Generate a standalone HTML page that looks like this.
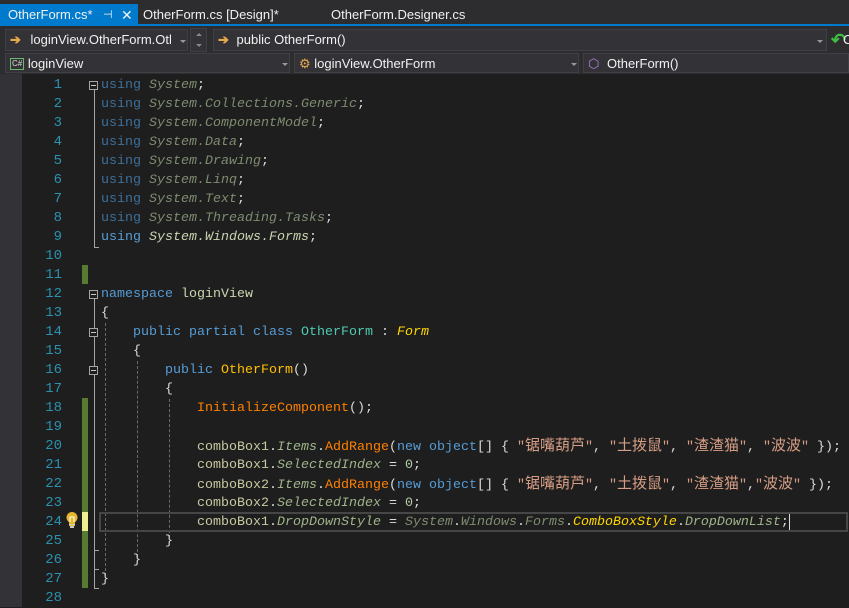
<!DOCTYPE html>
<html><head><meta charset="utf-8"><style>
*{margin:0;padding:0;box-sizing:border-box}
body{width:849px;height:607px;overflow:hidden;background:#1e1e1e;font-family:"Liberation Sans","Noto Sans CJK SC",sans-serif;position:relative}
.abs{position:absolute}
#top{left:0;top:0;width:849px;height:74px;background:#2d2d30}
.tab{position:absolute;top:4px;height:21px;font-size:13px;color:#f1f1f1;line-height:22px;white-space:nowrap}
.dd{position:absolute;background:#333337;border:1px solid #3f3f46;color:#f1f1f1;font-size:13px;line-height:19px;white-space:nowrap;overflow:hidden}
.arrow{position:absolute;width:0;height:0;border-left:3px solid transparent;border-right:3px solid transparent;border-top:3px solid #999}
#margin{left:0;top:74px;width:22px;height:533px;background:#333337}
.ln{position:absolute;left:22px;width:40px;text-align:right;color:#2b91af;font-family:"Liberation Mono",monospace;font-size:14px;height:19px;line-height:19px}
.code{position:absolute;left:101px;font-family:"Liberation Mono","Noto Sans CJK SC",monospace;font-size:13.33px;height:19px;line-height:19px;white-space:pre;color:#dcdcdc}
.k{color:#569cd6}.ku{color:#3d6f9a}.ns{color:#a5b393;font-style:italic}.nsu{color:#7e8c70;font-style:italic}
.id{color:#c8c8a0}.pr{color:#a0b48a;font-style:italic}.m{color:#ff8000}.s{color:#d69d85}.cl{color:#4ec9b0}.y{color:#ffd700;font-style:italic}.ct{color:#ffc000}
.c{font-size:15px}
.fold{position:absolute;left:89px;width:9px;height:9px;border:1px solid #a5a5a5;background:#1e1e1e}
.fold:after{content:"";position:absolute;left:1px;top:3px;width:5px;height:1px;background:#c8c8c8}
.dash{position:absolute;width:0;border-left:1px dashed #6a6a6a}
.g{position:absolute;left:82px;width:6px;background:#577b31}
</style></head><body>
<div id="top" class="abs"></div>
<div class="abs" style="left:0;top:4px;width:138px;height:21px;background:#007acc"></div>
<div class="tab" style="left:8px">OtherForm.cs*</div>
<div class="tab" style="left:103px;font-size:11px">⊣</div>
<div class="tab" style="left:121px;font-size:14px">✕</div>
<div class="tab" style="left:143px">OtherForm.cs [Design]*</div>
<div class="tab" style="left:331px">OtherForm.Designer.cs</div>
<div class="abs" style="left:0;top:24px;width:849px;height:2px;background:#007acc"></div>

<div class="dd" style="left:5px;top:29px;width:183px;height:22px"><span style="color:#e8a84c;margin-left:4px;font-weight:bold">➔</span> <span style="margin-left:6px">loginView.OtherForm.Otl</span></div>
<div class="arrow" style="left:180px;top:40px"></div>
<div class="dd" style="left:190px;top:28px;width:17px;height:24px;border-color:#3f3f46"></div>
<div class="abs" style="left:196px;top:33px;border-left:3px solid transparent;border-right:3px solid transparent;border-bottom:3px solid #888"></div>
<div class="abs" style="left:196px;top:44px;border-left:3px solid transparent;border-right:3px solid transparent;border-top:3px solid #888"></div>
<div class="dd" style="left:213px;top:29px;width:614px;height:22px"><span style="color:#e8a84c;margin-left:4px;font-weight:bold">➔</span> <span style="margin-left:4px">public OtherForm()</span></div>
<div class="arrow" style="left:817px;top:40px"></div>
<div class="abs" style="left:831px;top:30px;width:12px;height:20px;color:#3fbf3f;font-size:18px;line-height:20px;font-weight:bold">↶</div>
<div class="abs" style="left:843px;top:30px;color:#f1f1f1;font-size:13px;line-height:20px">C</div>

<div class="dd" style="left:5px;top:53px;width:285px;height:20px"><span style="display:inline-block;border:1px solid #6fb46f;color:#ddd;font-size:8px;line-height:10px;padding:0 1px;margin-left:4px;vertical-align:2px">C#</span> loginView</div>
<div class="arrow" style="left:282px;top:63px"></div>
<div class="dd" style="left:294px;top:53px;width:285px;height:20px"><span style="color:#e8a84c;margin-left:4px">⚙</span> loginView.OtherForm</div>
<div class="arrow" style="left:571px;top:63px"></div>
<div class="dd" style="left:583px;top:53px;width:266px;height:20px"><span style="color:#b180d7;margin-left:4px">⬡</span> <span style="margin-left:4px">OtherForm()</span></div>

<div id="margin" class="abs"></div>

<div class="g" style="top:265px;height:19px"></div>
<div class="g" style="top:398px;height:190px"></div>
<div class="abs" style="left:82px;top:512px;width:6px;height:19px;background:#efef90"></div>

<div class="abs" style="left:94px;top:90px;width:1px;height:157px;background:#a5a5a5"></div>
<div class="abs" style="left:94px;top:247px;width:5px;height:1px;background:#a5a5a5"></div>
<div class="abs" style="left:94px;top:299px;width:1px;height:289px;background:#a5a5a5"></div>
<div class="abs" style="left:94px;top:588px;width:5px;height:1px;background:#a5a5a5"></div>
<div class="abs" style="left:94px;top:569px;width:5px;height:1px;background:#a5a5a5"></div>
<div class="abs" style="left:94px;top:550px;width:5px;height:1px;background:#a5a5a5"></div>
<div class="fold" style="top:81px"></div>
<div class="fold" style="top:290px"></div>
<div class="fold" style="top:328px"></div>
<div class="fold" style="top:366px"></div>
<div class="dash" style="left:105px;top:323px;height:253px"></div>
<div class="dash" style="left:137px;top:361px;height:196px"></div>
<div class="dash" style="left:169px;top:399px;height:139px"></div>

<div class="abs" style="left:99px;top:512px;width:749px;height:20px;border:2px solid #464646"></div>
<div class="abs" style="left:65px;top:511px;width:14px;height:18px">
<svg width="14" height="18" viewBox="0 0 14 18"><circle cx="7" cy="6.5" r="5.5" fill="#e5b830"/><rect x="4" y="11" width="6" height="4" fill="#e5b830"/><rect x="4" y="13" width="6" height="1" fill="#ccc"/><rect x="5" y="15" width="4" height="2" fill="#ccc"/><path d="M5 6 L5 11 M9 6 L9 11 M5 6 L9 6" stroke="#fff" stroke-width="1" fill="none"/></svg></div>
<div class="abs" style="left:789px;top:514px;width:1px;height:16px;background:#dcdcdc"></div>

<div class="ln" style="top:76px">1</div><div class="code" style="top:76px"><span class="ku">using</span> <span class="nsu">System</span>;</div>
<div class="ln" style="top:95px">2</div><div class="code" style="top:95px"><span class="ku">using</span> <span class="nsu">System.Collections.Generic</span>;</div>
<div class="ln" style="top:114px">3</div><div class="code" style="top:114px"><span class="ku">using</span> <span class="nsu">System.ComponentModel</span>;</div>
<div class="ln" style="top:133px">4</div><div class="code" style="top:133px"><span class="ku">using</span> <span class="nsu">System.Data</span>;</div>
<div class="ln" style="top:152px">5</div><div class="code" style="top:152px"><span class="ku">using</span> <span class="nsu">System.Drawing</span>;</div>
<div class="ln" style="top:171px">6</div><div class="code" style="top:171px"><span class="ku">using</span> <span class="nsu">System.Linq</span>;</div>
<div class="ln" style="top:190px">7</div><div class="code" style="top:190px"><span class="ku">using</span> <span class="nsu">System.Text</span>;</div>
<div class="ln" style="top:209px">8</div><div class="code" style="top:209px"><span class="ku">using</span> <span class="nsu">System.Threading.Tasks</span>;</div>
<div class="ln" style="top:228px">9</div><div class="code" style="top:228px"><span class="k">using</span> <span class="ns" style="color:#c8d4b0">System.Windows.Forms</span>;</div>
<div class="ln" style="top:247px">10</div>
<div class="ln" style="top:266px">11</div>
<div class="ln" style="top:285px">12</div><div class="code" style="top:285px"><span class="k">namespace</span> <span class="id" style="color:#c8d8b0">loginView</span></div>
<div class="ln" style="top:304px">13</div><div class="code" style="top:304px">{</div>
<div class="ln" style="top:323px">14</div><div class="code" style="top:323px">    <span class="k">public</span> <span class="k">partial</span> <span class="k">class</span> <span class="cl">OtherForm</span> : <span class="y">Form</span></div>
<div class="ln" style="top:342px">15</div><div class="code" style="top:342px">    {</div>
<div class="ln" style="top:361px">16</div><div class="code" style="top:361px">        <span class="k">public</span> <span class="ct">OtherForm</span>()</div>
<div class="ln" style="top:380px">17</div><div class="code" style="top:380px">        {</div>
<div class="ln" style="top:399px">18</div><div class="code" style="top:399px">            <span class="m">InitializeComponent</span>();</div>
<div class="ln" style="top:418px">19</div>
<div class="ln" style="top:437px">20</div><div class="code" style="top:437px">            <span class="id">comboBox1</span>.<span class="pr">Items</span>.<span class="m">AddRange</span>(<span class="k">new</span> <span class="k">object</span>[] { <span class="s">"<span class="c">锯嘴葫芦</span>"</span>, <span class="s">"<span class="c">土拨鼠</span>"</span>, <span class="s">"<span class="c">渣渣猫</span>"</span>, <span class="s">"<span class="c">波波</span>"</span> });</div>
<div class="ln" style="top:456px">21</div><div class="code" style="top:456px">            <span class="id">comboBox1</span>.<span class="pr">SelectedIndex</span> = <span style="color:#b5cea8">0</span>;</div>
<div class="ln" style="top:475px">22</div><div class="code" style="top:475px">            <span class="id">comboBox2</span>.<span class="pr">Items</span>.<span class="m">AddRange</span>(<span class="k">new</span> <span class="k">object</span>[] { <span class="s">"<span class="c">锯嘴葫芦</span>"</span>, <span class="s">"<span class="c">土拨鼠</span>"</span>, <span class="s">"<span class="c">渣渣猫</span>"</span>,<span class="s">"<span class="c">波波</span>"</span> });</div>
<div class="ln" style="top:494px">23</div><div class="code" style="top:494px">            <span class="id">comboBox2</span>.<span class="pr">SelectedIndex</span> = <span style="color:#b5cea8">0</span>;</div>
<div class="ln" style="top:513px">24</div><div class="code" style="top:513px">            <span class="id">comboBox1</span>.<span class="pr">DropDownStyle</span> = <span class="nsu">System</span>.<span class="nsu">Windows</span>.<span class="nsu">Forms</span>.<span class="y">ComboBoxStyle</span>.<span class="pr">DropDownList</span>;</div>
<div class="ln" style="top:532px">25</div><div class="code" style="top:532px">        }</div>
<div class="ln" style="top:551px">26</div><div class="code" style="top:551px">    }</div>
<div class="ln" style="top:570px">27</div><div class="code" style="top:570px">}</div>
<div class="ln" style="top:589px">28</div>
</body></html>
